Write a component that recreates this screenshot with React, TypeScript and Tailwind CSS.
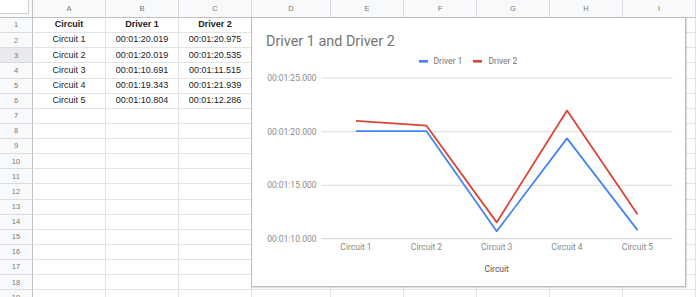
import React from "react";

const colLetters = ["A", "B", "C", "D", "E", "F", "G", "H", "I"];
const data: string[][] = [
  ["Circuit", "Driver 1", "Driver 2"],
  ["Circuit 1", "00:01:20.019", "00:01:20.975"],
  ["Circuit 2", "00:01:20.019", "00:01:20.535"],
  ["Circuit 3", "00:01:10.691", "00:01:11.515"],
  ["Circuit 4", "00:01:19.343", "00:01:21.939"],
  ["Circuit 5", "00:01:10.804", "00:01:12.286"],
];

const xs = [104, 174.5, 244.7, 315, 385.5];
const yOf = (v: number) => 220.7 - (v - 70) * 10.73;
const d1 = [80.019, 80.019, 70.691, 79.343, 70.804];
const d2 = [80.975, 80.535, 71.515, 81.939, 72.286];
const pts = (d: number[]) => d.map((v, i) => `${xs[i]},${yOf(v).toFixed(1)}`).join(" ");

function Chart() {
  const grid = [
    { y: 60, label: "00:01:25.000" },
    { y: 113.7, label: "00:01:20.000" },
    { y: 167.3, label: "00:01:15.000" },
    { y: 220.7, label: "00:01:10.000" },
  ];
  return (
    <div className="absolute left-[251px] top-[17px] w-[435px] h-[270px] bg-white border border-[#bdbdbd] shadow-[1px_1px_1px_rgba(0,0,0,0.12)]">
      <svg width="433" height="268" className="block" style={{ fontFamily: "Roboto, sans-serif" }}>
        <text x="14" y="28" fontSize="14.4" fill="#757575">Driver 1 and Driver 2</text>
        <rect x="167" y="42" width="9" height="2.6" fill="#4285f4" />
        <text x="181.5" y="46" fontSize="8.5" fill="#757575">Driver 1</text>
        <rect x="221" y="42" width="9" height="2.6" fill="#db4437" />
        <text x="236.5" y="46" fontSize="8.5" fill="#757575">Driver 2</text>
        {grid.map((g) => (
          <g key={g.label}>
            <line x1="69.5" x2="420.5" y1={g.y} y2={g.y} stroke={g.y > 200 ? "#cfcfcf" : "#dcdcdc"} strokeWidth="1" />
            <text x="64.5" y={g.y + 3} fontSize="8.5" fill="#8a8a8a" textAnchor="end">{g.label}</text>
          </g>
        ))}
        {xs.map((x, i) => (
          <text key={i} x={x} y="232" fontSize="8.5" fill="#8a8a8a" textAnchor="middle">{`Circuit ${i + 1}`}</text>
        ))}
        <text x="244.7" y="254" fontSize="8.5" fill="#555" textAnchor="middle">Circuit</text>
        <polyline points={pts(d1)} fill="none" stroke="#4285f4" strokeWidth="1.8" strokeLinejoin="round" />
        <polyline points={pts(d2)} fill="none" stroke="#db4437" strokeWidth="1.8" strokeLinejoin="round" />
      </svg>
    </div>
  );
}

export default function App() {
  const rows = Array.from({ length: 19 }, (_, i) => i + 1);
  return (
    <div className="relative w-[696px] h-[297px] overflow-hidden bg-white" style={{ fontFamily: '"Liberation Sans", Arial, sans-serif' }}>
      <div className="grid grid-cols-[33px_73px_73px_73px_79px_73px_73px_73px_73px_1fr] grid-rows-[18px_repeat(19,15.13px)]">
        <div className="bg-[#f8f9fa] border-r border-b border-[#c0c0c0] relative">
          <div className="absolute left-0 top-0 w-[29px] h-[14px] bg-white border-r border-b border-[#d0d0d0]" />
        </div>
        {colLetters.map((c) => (
          <div key={c} className="bg-[#f8f9fa] border-r border-b border-r-[#dadce0] border-b-[#c0c0c0] flex items-center justify-center text-[7.5px] text-[#777]">
            {c}
          </div>
        ))}
        {rows.map((r) => (
          <React.Fragment key={r}>
            <div className={`${r === 3 ? "bg-[#e8eaed]" : "bg-[#f8f9fa]"} border-r border-b border-r-[#c0c0c0] border-b-[#dadce0] flex items-center justify-center text-[7.5px] text-[#777]`}>
              {r}
            </div>
            {colLetters.map((c, ci) => {
              const txt = ci < 3 && r <= 6 ? data[r - 1][ci] : "";
              return (
                <div
                  key={c}
                  className={`border-r border-b border-[#e2e3e3] flex items-center justify-center text-[9px] text-[#222] whitespace-nowrap ${r === 1 ? "font-bold" : ""}`}
                >
                  {txt}
                </div>
              );
            })}
          </React.Fragment>
        ))}
      </div>
      <Chart />
    </div>
  );
}
